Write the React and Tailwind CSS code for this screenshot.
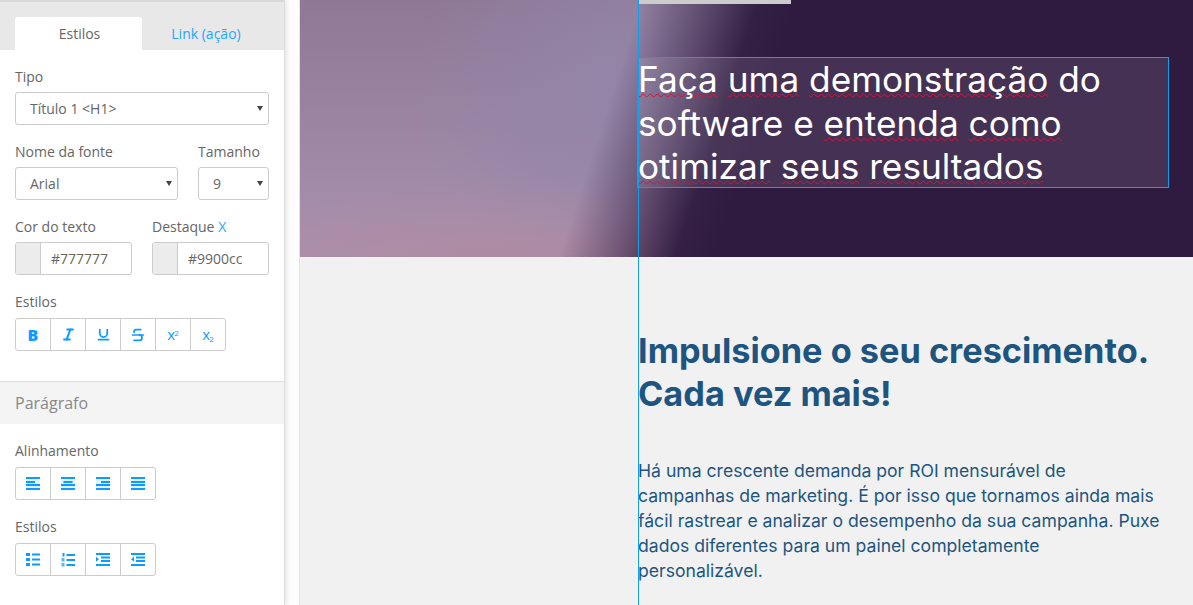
import React from 'react';
import { Italic, Underline, Strikethrough } from 'lucide-react';

const Caret = () => (
  <svg width="6" height="5" viewBox="0 0 6 5" className="shrink-0">
    <path d="M0 0h6L3 5z" fill="#444" />
  </svg>
);

const Select = ({ value, className, pad = 'pl-[14px]' }) => (
  <div className={`h-[33px] flex items-center justify-between border border-[#ccc] rounded-[3px] bg-white pr-[5px] text-[#666] ${pad} ${className}`}>
    <span>{value}</span>
    <Caret />
  </div>
);

const ColorField = ({ value, className }) => (
  <div className={`h-[33px] flex border border-[#ccc] rounded-[3px] overflow-hidden bg-white text-[#666] ${className}`}>
    <div className="w-[25px] bg-[#ececec] border-r border-[#ccc]" />
    <div className="pl-[10px] flex items-center">{value}</div>
  </div>
);

const Lines = ({ rows }) => (
  <svg width="14" height="13" viewBox="0 0 14 13">
    <rect x="0" y="0" width="14" height="13" fill="#0d9bff" opacity="0.12" />
    {rows.map(([x, w], i) => (
      <rect key={i} x={x} y={[0, 4, 7, 11][i]} width={w} height="2" fill="#0d9bff" />
    ))}
  </svg>
);

const Bullets = () => (
  <svg width="14" height="13" viewBox="0 0 14 13" fill="#0d9bff">
    <rect x="0" y="0" width="4" height="3" />
    <rect x="0" y="5" width="4" height="3" />
    <rect x="0" y="10" width="4" height="3" />
    <rect x="6" y="0.5" width="8" height="2" />
    <rect x="6" y="5.5" width="8" height="2" />
    <rect x="6" y="10.5" width="8" height="2" />
  </svg>
);

const Numbers = () => (
  <svg width="14" height="14" viewBox="0 0 14 14" fill="#0d9bff">
    <rect x="1.5" y="0" width="2" height="3.5" />
    <rect x="0.5" y="5" width="3" height="3.5" opacity="0.7" />
    <rect x="0.5" y="10" width="3" height="3.5" opacity="0.7" />
    <rect x="5.5" y="1" width="8.5" height="2" />
    <rect x="5.5" y="6" width="8.5" height="2" />
    <rect x="5.5" y="11" width="8.5" height="2" />
  </svg>
);

const Indent = ({ out }) => (
  <svg width="14" height="13" viewBox="0 0 14 13" fill="#0d9bff">
    <rect x="0" y="0" width="14" height="2" />
    <rect x="5" y="3.5" width="9" height="2" />
    <rect x="5" y="7" width="9" height="2" />
    <rect x="0" y="11" width="14" height="2" />
    <path d={out ? 'M3 3.8v5L0 6.3z' : 'M0 3.8v5l3-2.5z'} />
  </svg>
);

const BtnGroup = ({ items }) => (
  <div className="flex w-fit border border-[#ccc] rounded-[3px] bg-white">
    {items.map((item, i) => (
      <div key={i} className={`h-[31px] flex items-center justify-center text-[#0d9bff] ${i > 0 ? 'w-[35px] border-l border-[#ccc]' : 'w-[34px]'}`}>
        {item}
      </div>
    ))}
  </div>
);

const Label = ({ children, gap = 'mb-[6px]' }) => <div className={`h-[19px] leading-[19px] text-[#666] ${gap}`}>{children}</div>;

const Bad = ({ children }) => (
  <span className="underline decoration-wavy decoration-[#d8123c] decoration-1 underline-offset-[1px]">{children}</span>
);

function Sidebar() {
  const styleButtons = [
    <span className="font-extrabold text-[16px]">B</span>,
    <Italic size={15} strokeWidth={3.4} />,
    <Underline size={15} strokeWidth={2.8} />,
    <Strikethrough size={16} strokeWidth={2.6} />,
    <span className="text-[15px] leading-none">x<sup className="text-[8px] -ml-px">2</sup></span>,
    <span className="text-[15px] leading-none">x<sub className="text-[8px] -ml-px">2</sub></span>,
  ];
  const alignButtons = [
    <Lines rows={[[0, 14], [0, 9], [0, 14], [0, 14]]} />,
    <Lines rows={[[0, 14], [2.5, 9], [0, 14], [0, 14]]} />,
    <Lines rows={[[0, 14], [5, 9], [0, 14], [0, 14]]} />,
    <Lines rows={[[0, 14], [0, 14], [0, 14], [0, 14]]} />,
  ];
  const listButtons = [<Bullets />, <Numbers />, <Indent />, <Indent out />];

  return (
    <aside className="w-[285px] h-[605px] shrink-0 bg-white border-r border-[#ddd] shadow-[1px_0_5px_rgba(0,0,0,0.12)] z-10 overflow-hidden">
      <div className="h-[50px] bg-[#e8e8e8] border-t-2 border-[#d8d8d8] flex items-end pl-[15px]">
        <div className="w-[127px] h-[33px] bg-white rounded-t-[3px] flex items-center justify-center text-[#666] pl-[2px]">Estilos</div>
        <div className="w-[128px] h-[33px] flex items-center justify-center text-[#1ea7fd]">Link (ação)</div>
      </div>

      <div className="px-[15px] pt-[17px]">
        <Label>Tipo</Label>
        <Select value="Título 1 <H1>" className="w-[254px]" />

        <div className="flex justify-between w-[254px] mt-[17px]">
          <div>
            <Label>Nome da fonte</Label>
            <Select value="Arial" className="w-[163px]" />
          </div>
          <div>
            <Label>Tamanho</Label>
            <Select value="9" className="w-[71px]" />
          </div>
        </div>

        <div className="flex justify-between w-[254px] mt-[17px]">
          <div>
            <Label>Cor do texto</Label>
            <ColorField value="#777777" className="w-[117px]" />
          </div>
          <div>
            <Label>Destaque <span className="text-[#1ea7fd]">X</span></Label>
            <ColorField value="#9900cc" className="w-[117px]" />
          </div>
        </div>

        <div className="mt-[17px]">
          <Label gap="mb-[7px]">Estilos</Label>
          <BtnGroup items={styleButtons} />
        </div>
      </div>

      <div className="h-[43px] mt-[30px] bg-[#f4f4f4] border-t border-[#ddd] px-[15px] flex items-center text-[16px] text-[#888]">Parágrafo</div>

      <div className="px-[15px] pt-[17px]">
        <Label gap="mb-[7px]">Alinhamento</Label>
        <BtnGroup items={alignButtons} />
        <div className="mt-[17px]">
          <Label gap="mb-[7px]">Estilos</Label>
          <BtnGroup items={listButtons} />
        </div>
      </div>
    </aside>
  );
}

function Canvas() {
  return (
    <main className="relative flex-1 ml-[14px] h-[605px] bg-[#f1f1f1] border-l border-[#e4e4e4] overflow-hidden font-['Inter',sans-serif]">
      <div className="relative h-[257px] pl-[338px] pt-[57px] bg-[linear-gradient(108deg,rgba(47,26,64,0)_35%,rgba(47,26,64,0.55)_42%,rgba(47,26,64,0.95)_47%,#2f1a40_51%),radial-gradient(ellipse_45%_35%_at_22%_105%,#b08aa2,rgba(176,138,162,0)),radial-gradient(ellipse_25%_80%_at_38%_35%,#9385a9,rgba(147,133,169,0)),linear-gradient(#8e7895,#a892b0)]">
        <div className="absolute top-0 left-[338px] w-[153px] h-[4px] bg-[#ccc]" />
        <div className="w-[532px] h-[131px] -ml-px bg-white/10 shadow-[inset_0_0_0_1px_#10a0ea]">
          <div className="pl-px pt-px text-white text-[35.2px] font-normal leading-[43.5px] whitespace-nowrap">
            <span className="block"><Bad>Faça</Bad> <Bad>uma</Bad> <Bad>demonstração</Bad> do</span>
            <span className="block">software e <Bad>entenda</Bad> <Bad>como</Bad></span>
            <span className="block"><Bad>otimizar</Bad> <Bad>seus</Bad> <Bad>resultados</Bad></span>
          </div>
        </div>
      </div>

      <div className="pl-[338px] pt-[72px] text-[#1d5580] whitespace-nowrap">
        <h2 className="text-[34.3px] leading-[43px] font-bold">
          <span className="block">Impulsione o seu crescimento.</span>
          <span className="block">Cada vez mais!</span>
        </h2>
        <p className="mt-[43px] text-[17.6px] leading-[25px]">
          <span className="block">Há uma crescente demanda por ROI mensurável de</span>
          <span className="block">campanhas de marketing. É por isso que tornamos ainda mais</span>
          <span className="block">fácil rastrear e analizar o desempenho da sua campanha. Puxe</span>
          <span className="block">dados diferentes para um painel completamente</span>
          <span className="block">personalizável.</span>
        </p>
      </div>

      <div className="absolute top-0 bottom-0 left-[338px] w-px bg-[#10a0ea]" />
    </main>
  );
}

export default function App() {
  return (
    <div className="flex w-[1193px] h-[605px] overflow-hidden bg-[#fdfdfd] font-['Open_Sans',sans-serif] text-[14px]">
      <Sidebar />
      <Canvas />
    </div>
  );
}
